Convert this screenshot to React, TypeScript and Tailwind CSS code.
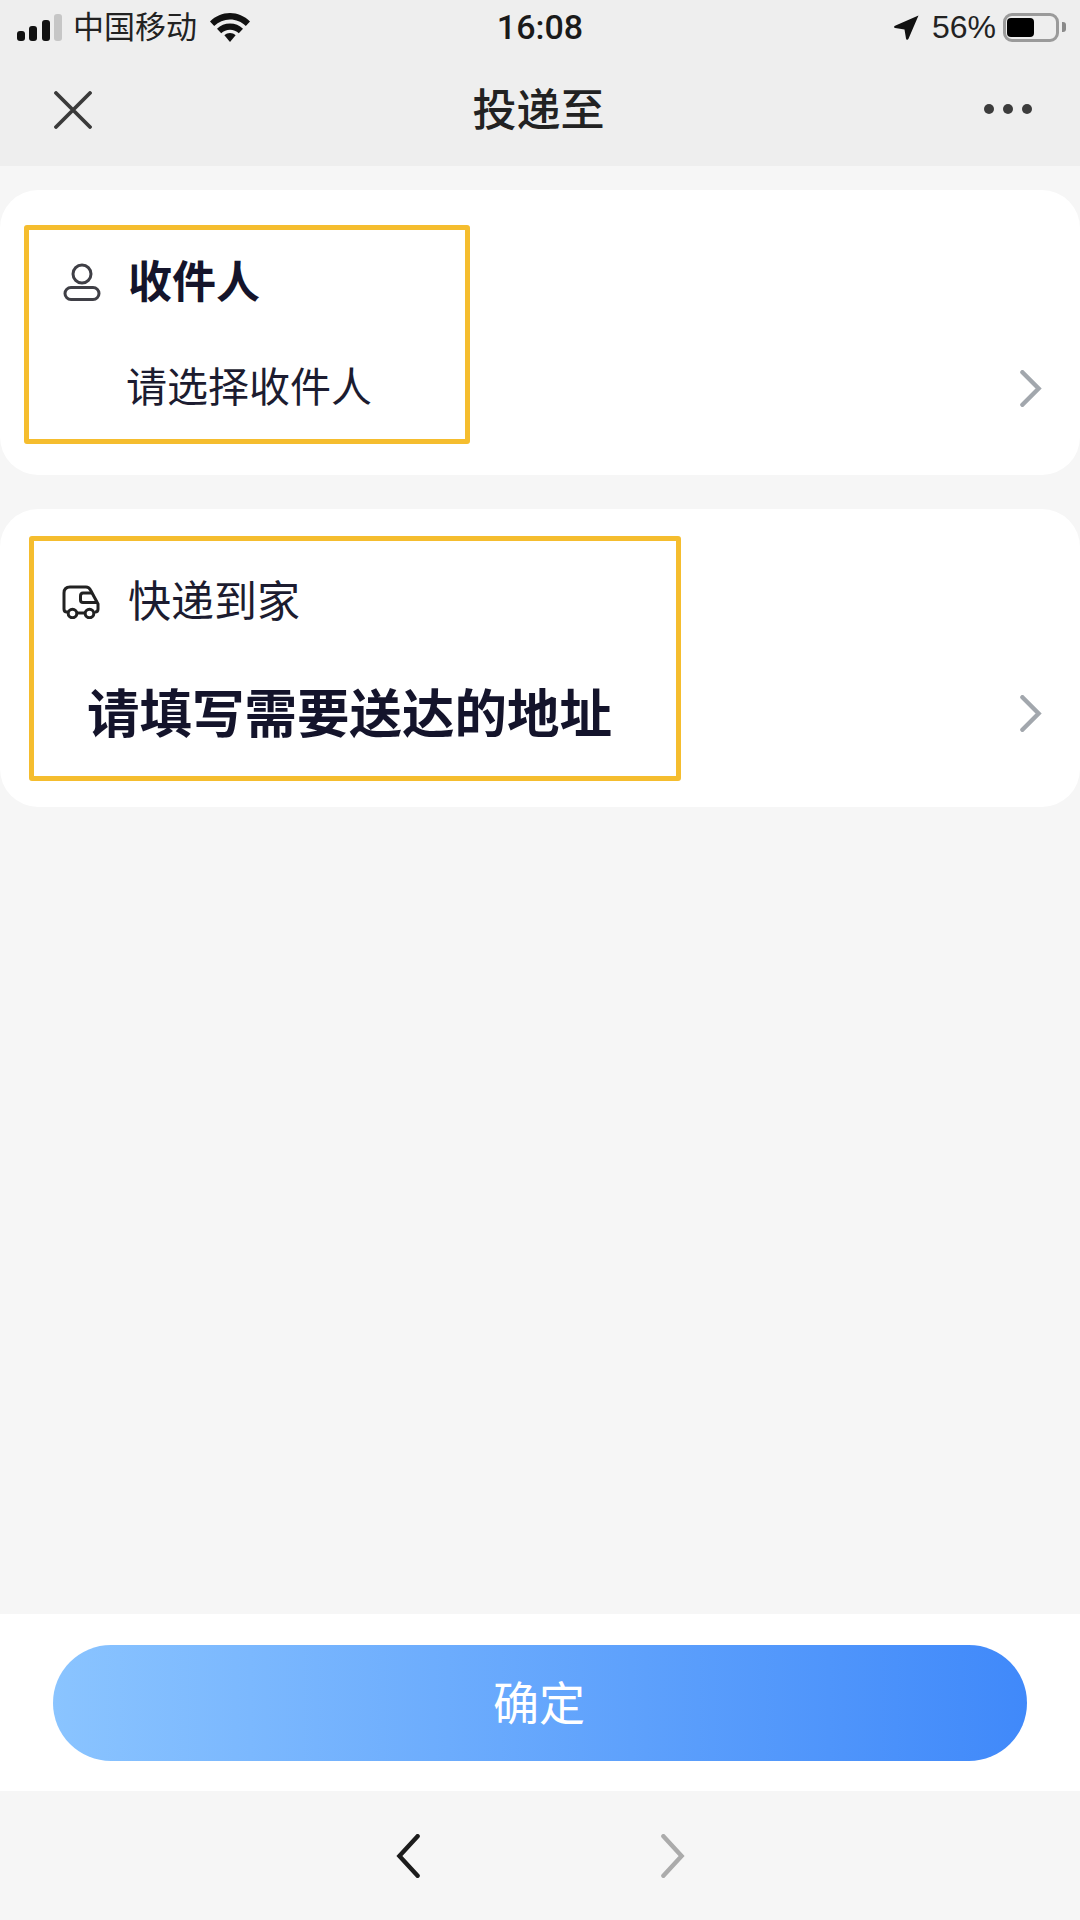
import React from "react";

const cjk = "font-['Noto_Sans_CJK_SC','Noto_Sans',sans-serif]";

function Chevron({ color, width = 25, height = 37, stroke = 4.4, left = false }: { color: string; width?: number; height?: number; stroke?: number; left?: boolean }) {
  const p = stroke;
  const d = left
    ? `M${width - p} ${p / 2} L${p} ${height / 2} L${width - p} ${height - p / 2}`
    : `M${p} ${p / 2} L${width - p} ${height / 2} L${p} ${height - p / 2}`;
  return (
    <svg width={width} height={height} viewBox={`0 0 ${width} ${height}`} fill="none" className="shrink-0">
      <path d={d} stroke={color} strokeWidth={stroke} strokeLinecap="round" strokeLinejoin="miter" />
    </svg>
  );
}

function StatusBar() {
  return (
    <div className="grid h-[54px] grid-cols-3 items-center text-[#111]">
      <div className="flex items-center pl-[17px]">
        <svg width="45" height="28" viewBox="0 0 45 28" className="mt-[2px] shrink-0">
          <rect x="0" y="17" width="8" height="10" rx="3" fill="#111" />
          <rect x="12" y="12" width="8" height="15" rx="3" fill="#111" />
          <rect x="25" y="6" width="8" height="21" rx="3" fill="#111" />
          <rect x="37" y="0" width="8" height="27" rx="3" fill="#c6c6c6" />
        </svg>
        <span className={`${cjk} ml-[11px] pb-[4px] text-[31px] leading-[40px] text-[#222] whitespace-nowrap`}>中国移动</span>
        <svg width="40" height="29" viewBox="0 0 40 29" className="ml-[13px] shrink-0">
          <path d="M20 0 C27.5 0 34.5 3 40 8.500 L35.800 13 C31.500 8.800 26 6.500 20 6.500 C14 6.500 8.500 8.800 4.200 13 L0 8.500 C5.500 3 12.500 0 20 0Z" fill="#111" />
          <path d="M20 10.500 C25 10.500 29.500 12.400 33 15.800 L28.800 20.300 C26.400 18 23.400 16.800 20 16.800 C16.600 16.800 13.600 18 11.200 20.300 L7 15.800 C10.500 12.400 15 10.500 20 10.500Z" fill="#111" />
          <path d="M20 20 C22 20 24 20.800 25.600 22.300 L20 29 L14.400 22.300 C16 20.800 18 20 20 20Z" fill="#111" />
        </svg>
      </div>
      <div className="text-center font-['Roboto',sans-serif] text-[34px] leading-[40px] font-medium text-[#1a1a1a]">16:08</div>
      <div className="flex items-center justify-end pr-[14px]">
        <svg width="25" height="25" viewBox="0 0 25 25" className="shrink-0">
          <path d="M24.500 0.500 L14.500 23.800 C13.800 25.200 12.300 24.900 12 23.500 L10.500 14.500 L1.200 13 C-0.200 12.700 -0.300 11.400 1 10.800 Z" fill="#111" />
        </svg>
        <span className="ml-[13px] font-['Liberation_Sans',sans-serif] text-[32px] leading-[40px] text-[#222]">56%</span>
        <div className="ml-[7px] flex h-[29px] w-[56px] items-center rounded-[9px] border-[3px] border-[#9a9a9a] p-[1px]">
          <div className="h-[19px] w-[27px] rounded-[4px] bg-black" />
        </div>
        <div className="ml-[3px] h-[10px] w-[4px] rounded-r-[3px] bg-[#8a8a8a]" />
      </div>
    </div>
  );
}

function TitleBar() {
  return (
    <div className="grid h-[112px] grid-cols-3 items-center">
      <div className="pl-[54px]">
        <svg width="38" height="38" viewBox="0 0 38 38" fill="none">
          <path d="M2 2 L36 36 M36 2 L2 36" stroke="#3a3a3a" strokeWidth="3.8" strokeLinecap="round" />
        </svg>
      </div>
      <div className={`${cjk} pb-[6px] pr-[3px] text-center text-[44px] leading-[60px] font-medium text-[#222]`}>投递至</div>
      <div className="flex justify-end gap-[9px] pr-[48px] pb-[2px]">
        <div className="h-[10px] w-[10px] rounded-full bg-[#3c3c3c]" />
        <div className="h-[10px] w-[10px] rounded-full bg-[#3c3c3c]" />
        <div className="h-[10px] w-[10px] rounded-full bg-[#3c3c3c]" />
      </div>
    </div>
  );
}

function PersonIcon() {
  return (
    <svg width="38" height="38" viewBox="0 0 38 38" fill="none" className="shrink-0">
      <circle cx="19" cy="11" r="9" stroke="#3f3f46" strokeWidth="3" />
      <rect x="2" y="24.500" width="34" height="12" rx="6" stroke="#3f3f46" strokeWidth="3" />
    </svg>
  );
}

function TruckIcon() {
  return (
    <svg width="38" height="34" viewBox="0 0 38 34" fill="none" className="mt-[2px] shrink-0">
      <path d="M6 27 H5 C3 27 2 26 2 24 V8 C2 4 4 2 8 2 H24 C26 2 27.500 3 28.500 5 L36 19 V24 C36 26 35 27 33 27" stroke="#222" strokeWidth="3" strokeLinejoin="round" />
      <path d="M30 8 H21 C19.500 8 18.500 9 18.500 11 V15 C18.500 16.500 19.500 17.500 21 17.500 H35" stroke="#222" strokeWidth="3" />
      <path d="M15 28 H23" stroke="#222" strokeWidth="3" />
      <circle cx="10.500" cy="28.500" r="4.300" stroke="#222" strokeWidth="3" />
      <circle cx="27.500" cy="28.500" r="4.300" stroke="#222" strokeWidth="3" />
    </svg>
  );
}

export default function App() {
  return (
    <div className={`${cjk} flex h-[1920px] w-[1080px] flex-col overflow-hidden bg-[#f6f6f6]`}>
      <div className="bg-[#eeeeee]">
        <StatusBar />
        <TitleBar />
      </div>

      <div className="mt-[24px] flex h-[285px] items-end justify-between rounded-[38px] bg-white pr-[37px]">
        <div className="mb-[31px] ml-[24px] h-[219px] w-[446px] rounded-[3px] border-[5px] border-[#f5bd2e] pt-[22px]">
          <div className="flex h-[60px] items-center pl-[34px]">
            <PersonIcon />
            <span className="ml-[27px] pb-[6px] text-[44px] leading-[60px] font-bold text-[#14142b]">收件人</span>
          </div>
          <div className="mt-[42px] pl-[97px] text-[41px] leading-[60px] text-[#1c1c30] whitespace-nowrap">请选择收件人</div>
        </div>
        <div className="mb-[68px]">
          <Chevron color="#a2a7ad" />
        </div>
      </div>

      <div className="mt-[34px] flex h-[298px] items-end justify-between rounded-[38px] bg-white pr-[37px]">
        <div className="mb-[26px] ml-[29px] h-[245px] w-[652px] rounded-[3px] border-[5px] border-[#f5bd2e] pt-[30px]">
          <div className="flex h-[60px] items-center pl-[28px]">
            <TruckIcon />
            <span className="ml-[28px] pb-[6px] text-[43px] leading-[60px] text-[#1c1c30]">快递到家</span>
          </div>
          <div className="mt-[44px] pl-[53px] text-[52.5px] leading-[70px] font-bold text-[#14142b] whitespace-nowrap">请填写需要送达的地址</div>
        </div>
        <div className="mb-[75px]">
          <Chevron color="#a2a7ad" />
        </div>
      </div>

      <div className="flex-1" />

      <div className="flex h-[177px] items-center bg-white px-[53px]">
        <div className="flex h-[116px] w-full items-center justify-center rounded-[58px] bg-[linear-gradient(90deg,#8ac4ff,#4089fa)] pb-[6px] pr-[2px] text-[46px] leading-[60px] text-white">
          确定
        </div>
      </div>

      <div className="flex h-[129px] items-center justify-center gap-[237px]">
        <Chevron color="#1c1c1c" width={27} height={44} stroke={4.4} left />
        <Chevron color="#ababab" width={27} height={44} stroke={4.4} />
      </div>
    </div>
  );
}
